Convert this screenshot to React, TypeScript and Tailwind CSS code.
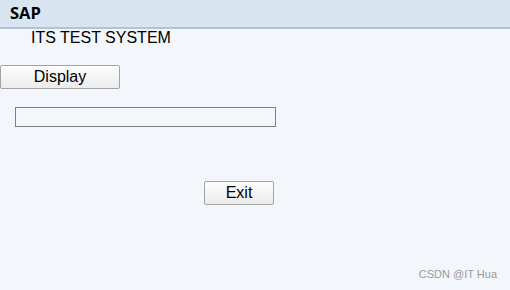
import React from "react";

const App: React.FC = () => {
  return (
    <div className="relative flex h-[290px] w-[510px] flex-col bg-[#f3f7fb] font-['Liberation_Sans',Arial,sans-serif]">
      {/* Header */}
      <div className="flex h-[29px] shrink-0 items-center border-b-2 border-[#b1c3d6] bg-[#d9e4f1] pl-[10px]">
        <span className="font-['Open_Sans',sans-serif] text-[16.5px] font-bold text-black">SAP</span>
      </div>

      {/* Title */}
      <p className="ml-[31px] text-[16px] leading-[17px] text-black">ITS TEST SYSTEM</p>

      {/* Display button */}
      <button className="mt-[19px] flex h-[24px] w-[120px] items-center justify-center rounded-[2px] border border-[#a3a3a3] bg-gradient-to-b from-[#fdfdfd] to-[#ececec] text-[16px] text-black">
        Display
      </button>

      {/* Input */}
      <input className="ml-[15px] mt-[18px] h-[20px] w-[261px] border border-[#7f7f7f] bg-[#f3f7fb] outline-none" />

      {/* Exit button */}
      <button className="ml-[204px] mt-[54px] flex h-[24px] w-[70px] items-center justify-center rounded-[2px] border border-[#a3a3a3] bg-gradient-to-b from-[#fdfdfd] to-[#ececec] text-[16px] text-black">
        Exit
      </button>

      {/* Watermark */}
      <span className="absolute bottom-[8px] right-[13px] text-[11px] text-[#9a9a9a]">CSDN @IT Hua</span>
    </div>
  );
};

export default App;
